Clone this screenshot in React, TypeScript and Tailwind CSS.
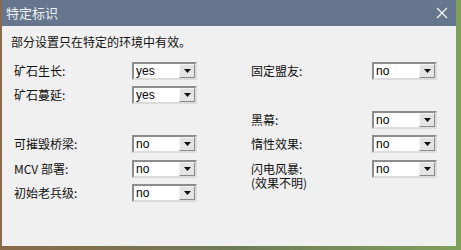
import React from 'react';

const cjk = { fontFamily: '"Noto Sans CJK SC", "Liberation Sans", sans-serif' };

const Combo = ({ value }: { value: string }) => (
  <div className="flex h-[18px] w-[65px] border-2 border-t-[#8c8c8c] border-l-[#8c8c8c] border-r-[#dcdcdc] border-b-[#dcdcdc] bg-white">
    <span
      className="flex-1 pl-[2px] text-[12px] leading-[14px] text-black"
      style={{ fontFamily: '"Liberation Sans", Arial, sans-serif' }}
    >
      {value}
    </span>
    <div className="flex w-[16px] items-center justify-center border border-t-[#f4f4f4] border-l-[#f4f4f4] border-r-[#8a8a8a] border-b-[#8a8a8a] bg-[#e4e4e4]">
      <svg width="7" height="4" viewBox="0 0 7 4">
        <path d="M0 0h7L3.5 4z" fill="#111" />
      </svg>
    </div>
  </div>
);

const Label = ({ children }: { children: React.ReactNode }) => (
  <span className="block text-[12px] leading-[14px] text-[#111]" style={cjk}>
    {children}
  </span>
);

export default function App() {
  return (
    <div className="h-[250px] w-[461px] overflow-hidden bg-gradient-to-r from-[#8a6a48] via-[#6f7b58] to-[#7fa05a]">
      <div className="ml-[2px] flex h-[246px] w-[454px] flex-col bg-[#f0f0f0]">
        {/* title bar */}
        <div className="flex h-[26px] items-center justify-between bg-[#66768e] pl-[4px] pr-[8px]">
          <span className="text-[13px] text-[#eef1f5]" style={cjk}>
            特定标识
          </span>
          <svg width="12" height="12" viewBox="0 0 12 12">
            <path d="M1 1L11 11M11 1L1 11" stroke="#f4f6f8" strokeWidth="1.3" />
          </svg>
        </div>

        <div className="pl-[9px] pt-[9px] text-[12px] leading-[14px] text-[#111]" style={cjk}>
          部分设置只在特定的环境中有效。
        </div>

        {/* settings grid */}
        <div className="mt-[13px] grid grid-cols-[118px_65px_54px_121px_65px] grid-rows-[18px_18px_18px_18px_18px_18px] gap-y-[6.4px] pl-[12px]">
          <div className="col-start-1 row-start-1 flex items-center"><Label>矿石生长:</Label></div>
          <div className="col-start-2 row-start-1"><Combo value="yes" /></div>
          <div className="col-start-4 row-start-1 flex items-center"><Label>固定盟友:</Label></div>
          <div className="col-start-5 row-start-1"><Combo value="no" /></div>

          <div className="col-start-1 row-start-2 flex items-center"><Label>矿石蔓延:</Label></div>
          <div className="col-start-2 row-start-2"><Combo value="yes" /></div>

          <div className="col-start-4 row-start-3 flex items-center"><Label>黑幕:</Label></div>
          <div className="col-start-5 row-start-3"><Combo value="no" /></div>

          <div className="col-start-1 row-start-4 flex items-center"><Label>可摧毁桥梁:</Label></div>
          <div className="col-start-2 row-start-4"><Combo value="no" /></div>
          <div className="col-start-4 row-start-4 flex items-center"><Label>惰性效果:</Label></div>
          <div className="col-start-5 row-start-4"><Combo value="no" /></div>

          <div className="col-start-1 row-start-5 flex items-center"><Label>MCV 部署:</Label></div>
          <div className="col-start-2 row-start-5"><Combo value="no" /></div>
          <div className="col-start-4 row-start-5 pt-[2px]">
            <Label>闪电风暴:</Label>
            <Label>(效果不明)</Label>
          </div>
          <div className="col-start-5 row-start-5"><Combo value="no" /></div>

          <div className="col-start-1 row-start-6 flex items-center"><Label>初始老兵级:</Label></div>
          <div className="col-start-2 row-start-6"><Combo value="no" /></div>
        </div>
      </div>
    </div>
  );
}
